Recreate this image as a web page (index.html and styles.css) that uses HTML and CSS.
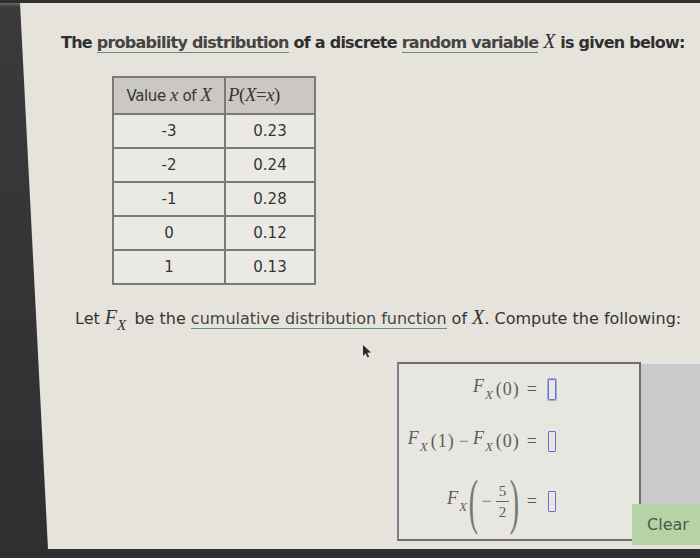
FILE: index.html
```html
<!DOCTYPE html>
<html>
<head>
<meta charset="utf-8">
<link rel="stylesheet" href="styles.css">
</head>
<body>
<div class="frame">
  <div class="screen">
    <p class="intro">The <span class="link">probability distribution</span> of a discrete <span class="link">random variable</span> <i class="mv big">X</i> is given below:</p>
    <table class="dist">
      <tr class="head"><th class="c1">Value <i class="mv big">x</i> of <i class="mv big">X</i></th><th class="c2"><i class="mv big">P</i><span class="mv big">(</span><i class="mv big">X</i><span class="mv big">=</span><i class="mv big">x</i><span class="mv big">)</span></th></tr>
      <tr><td>-3</td><td>0.23</td></tr>
      <tr><td>-2</td><td>0.24</td></tr>
      <tr><td>-1</td><td>0.28</td></tr>
      <tr><td>0</td><td>0.12</td></tr>
      <tr><td>1</td><td>0.13</td></tr>
    </table>
    <p class="let">Let <i class="mv big">F</i><sub class="sx"><i class="mv">X</i></sub> be the <span class="link">cumulative distribution function</span> of <i class="mv big">X</i>. Compute the following:</p>
    <div class="pointer-row">
      <svg class="cursor" width="12" height="14" viewBox="0 0 12 14"><path d="M2 1 L2 12 L4.6 9.4 L6.6 13.5 L8.2 12.8 L6.2 8.8 L10 8.6 Z" fill="#2b2b2b"/></svg>
    </div>
    <div class="answer-row">
      <div class="answer-box">
        <div class="eq r1"><span class="fx"><i>F</i><sub><i>X</i></sub></span><span class="par">(0)</span><span class="eqs">=</span><span class="inbox active"></span></div>
        <div class="eq r2"><span class="fx"><i>F</i><sub><i>X</i></sub></span><span class="par">(1)</span><span class="minus">&minus;</span><span class="fx"><i>F</i><sub><i>X</i></sub></span><span class="par">(0)</span><span class="eqs">=</span><span class="inbox"></span></div>
        <div class="eq r3"><span class="fx"><i>F</i><sub><i>X</i></sub></span><span class="bigp">(</span><span class="neg">&minus;</span><span class="frac"><span class="num">5</span><span class="den">2</span></span><span class="bigp">)</span><span class="eqs">=</span><span class="inbox"></span></div>
      </div>
      <div class="side">
        <div class="side-grey"></div>
        <div class="clear">Clear</div>
      </div>
    </div>
  </div>
</div>
</body>
</html>
```
FILE: styles.css
```css
html, body {
  margin: 0;
  padding: 0;
}
body {
  width: 700px;
  height: 558px;
  overflow: hidden;
  background: #2f2f31;
}
.frame {
  width: 700px;
  height: 558px;
  background: linear-gradient(#6a6a6c 0px, #3a3a3c 4px, #2f2f31 100%);
}
.screen {
  width: 700px;
  height: 546px;
  margin-top: 3px;
  box-sizing: border-box;
  background: #e6e3dc;
  clip-path: polygon(20px 0, 700px 0, 700px 546px, 48px 546px);
  padding: 28px 0 0 61px;
  font-family: "DejaVu Sans", Verdana, sans-serif;
  color: #3a3a3a;
}
.intro {
  margin: 0;
  font-size: 16px;
  line-height: 24px;
  letter-spacing: -0.75px;
  font-weight: bold;
  color: #2f2f2f;
  white-space: nowrap;
}
.link {
  border-bottom: 1.5px solid #5f8d75;
  color: #444;
}
.mv {
  font-family: "Liberation Serif", "Times New Roman", serif;
}
.big {
  font-size: 1.25em;
  line-height: 0;
}
i.mv {
  font-style: italic;
}
.intro .mv, .let .mv {
  font-weight: normal;
  letter-spacing: 0;
}
.dist {
  margin: 21px 0 0 51px;
  border-collapse: collapse;
  border: 2px solid #6c6c6c;
  font-size: 15px;
  color: #353535;
}
.dist th, .dist td {
  border: 2px solid #7a7a7a;
  text-align: center;
  padding: 0;
  height: 32px;
  background: #ebe9e4;
}
.dist th {
  background: #cbc8c3;
  font-weight: normal;
  height: 35px;
  white-space: nowrap;
  letter-spacing: -0.4px;
}
.dist .c1 { width: 110px; }
.dist .c2 { width: 86px; text-align: left; padding-left: 2px; }
.let {
  margin: 22px 0 0 14px;
  font-size: 16px;
  line-height: 24px;
  letter-spacing: 0;
  color: #333;
  white-space: nowrap;
}
.sx {
  font-size: 0.95em;
  vertical-align: -6px;
  line-height: 0;
  margin-right: 3px;
}
.pointer-row {
  height: 31px;
  box-sizing: border-box;
  padding: 13px 0 0 300px;
}
.cursor {
  display: block;
}
.answer-row {
  display: flex;
  align-items: stretch;
  margin-left: 336px;
}
.answer-box {
  width: 244px;
  height: 179px;
  box-sizing: border-box;
  border: 2px solid #6d6d70;
  border-left-color: #7f7f88;
  background: #e8e6e1;
  padding: 11px 83px 0 0;
  display: flex;
  flex-direction: column;
  align-items: flex-end;
  font-family: "Liberation Serif", "Times New Roman", serif;
  color: #5c5c5c;
  font-size: 18px;
}
.eq {
  display: flex;
  align-items: center;
  white-space: nowrap;
}
.r1 { height: 28px; }
.r2 { height: 28px; margin-top: 24px; }
.r3 { height: 58px; margin-top: 17px; }
.fx i { font-style: italic; }
.fx sub {
  font-size: 13px;
  vertical-align: -7px;
  margin-left: 1px;
  margin-right: 1px;
}
.par {
  margin-left: 2px;
  letter-spacing: 1px;
}
.minus {
  margin: 0 4px;
  color: #888;
}
.eqs {
  margin: 0 11px 0 7px;
}
.inbox {
  display: inline-block;
  width: 6px;
  height: 19px;
  border: 1.5px solid #6b6fd4;
  border-radius: 1px;
}
.inbox.active {
  box-shadow: 0 0 0 1px #a7a9dc;
}
.bigp {
  font-size: 62px;
  font-weight: 100;
  transform: scaleX(0.45);
  color: #777;
  line-height: 1;
  margin: 0 -5px;
}
.neg {
  margin: 0 4px 0 3px;
  color: #888;
}
.frac {
  display: inline-flex;
  flex-direction: column;
  align-items: center;
  font-size: 15px;
  line-height: 20px;
}
.num {
  border-bottom: 1px solid #666;
  padding: 0 3px;
}
.side {
  width: 59px;
  display: flex;
  flex-direction: column;
  margin-top: 2px;
}
.side-grey {
  flex: 1;
  background: #c9cacb;
}
.clear {
  height: 41px;
  margin-left: -9px;
  margin-bottom: -4px;
  background: #b6d3a6;
  color: #4b5a4c;
  font-size: 16px;
  display: flex;
  align-items: center;
  justify-content: center;
  padding-left: 4px;
}
```
